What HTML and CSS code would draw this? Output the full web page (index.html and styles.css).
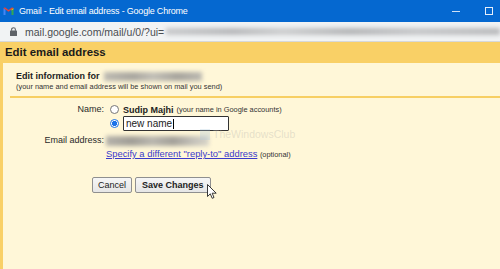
FILE: index.html
```html
<!DOCTYPE html>
<html lang="en">
<head>
    <meta charset="UTF-8">
    <title>Gmail - Edit email address - Google Chrome</title>
    <link rel="stylesheet" href="styles.css">
</head>
<body>
    <div class="titlebar">
        <svg class="gmail-logo" width="11" height="8" viewBox="0 0 11 8">
            <path d="M0.5 8V1.2L2.5 2.6V8Z" fill="#4285f4"/>
            <path d="M8.5 8V2.6L10.5 1.2V8Z" fill="#34a853"/>
            <path d="M0.5 1.2Q1 0 2.2 0.6L5.5 3L8.8 0.6Q10 0 10.5 1.2L8.5 2.6L5.5 4.8L2.5 2.6Z" fill="#ea4335"/>
            <path d="M8.5 2.6L10.5 1.2V2.2L8.5 3.6Z" fill="#fbbc04"/>
        </svg>
        <span class="title-text">Gmail - Edit email address - Google Chrome</span>
        <span class="win-btn minimize"></span>
        <span class="win-btn maximize"></span>
    </div>

    <div class="addressbar">
        <svg class="lock" width="7" height="9" viewBox="0 0 7 9">
            <rect x="0" y="3.6" width="7" height="5.4" rx="0.6" fill="#5f6368"/>
            <path d="M1.6 3.8V2.6A1.9 1.9 0 0 1 5.4 2.6V3.8" fill="none" stroke="#5f6368" stroke-width="1.1"/>
        </svg>
        <span class="url">mail.google.com/mail/u/0/?ui=</span>
        <span class="blur url-rest"></span>
    </div>

    <div class="header">Edit email address</div>

    <div class="content">
        <div class="info">
            <div class="info-title">Edit information for <span class="blur info-email"></span></div>
            <div class="info-note">(your name and email address will be shown on mail you send)</div>
        </div>

        <div class="form">
            <div class="label">Name:</div>
            <div class="value">
                <div class="radio-row">
                    <span class="radio"></span>
                    <b>Sudip Majhi</b> <span class="hint">(your name in Google accounts)</span>
                </div>
                <div class="radio-row">
                    <span class="radio checked"></span>
                    <span class="text-input">new name<span class="caret"></span></span>
                </div>
            </div>

            <div class="label email-label">Email address:</div>
            <div class="value">
                <div class="blur email-value"></div>
                <div class="link-row">
                    <a href="#" class="link">Specify a different "reply-to" address</a> <span class="hint">(optional)</span>
                </div>
            </div>
        </div>

        <div class="buttons">
            <button class="btn">Cancel</button>
            <button class="btn btn-save">Save Changes</button>
        </div>
    </div>

    <div class="watermark">
        <span class="wm-logo"></span>TheWindowsClub
    </div>

    <svg class="pointer" width="11" height="16" viewBox="0 0 11 16">
        <path d="M0.5 0.5V12.5L3.3 9.8L5.2 14.3L7 13.5L5.2 9.2H9.2Z" fill="#fff" stroke="#222" stroke-width="0.9" stroke-linejoin="round"/>
    </svg>
</body>
</html>
```

FILE: styles.css
```css
body {
    margin: 0;
    width: 500px;
    height: 269px;
    overflow: hidden;
    position: relative;
    background-color: #fff7d8;
    font-family: 'Liberation Sans', Arial, sans-serif;
    color: #222;
}

.titlebar {
    height: 22px;
    background-color: #0568d0;
    display: flex;
    align-items: center;
    color: #fff;
}
.gmail-logo {
    margin-left: 3px;
    margin-right: 5px;
}
.title-text {
    font-size: 9px;
    letter-spacing: -0.2px;
    flex: 1;
}
.win-btn {
    display: block;
    box-sizing: border-box;
}
.minimize {
    width: 8px;
    height: 1px;
    background-color: #cfe0f5;
    margin-right: 25px;
}
.maximize {
    width: 8px;
    height: 8px;
    border: 1px solid #e6eefa;
    margin-right: 7px;
}

.addressbar {
    height: 19px;
    background-color: #f1f3f4;
    border-bottom: 1px solid #d6d8da;
    display: flex;
    align-items: center;
}
.lock {
    margin-left: 10px;
    margin-right: 8px;
}
.url {
    font-size: 10.5px;
    color: #4a4d51;
}
.blur {
    display: inline-block;
    filter: blur(2px);
}
.url-rest {
    flex: 1;
    height: 7px;
    margin-left: 2px;
    background: linear-gradient(90deg, #c9cacc, #b8b9bb 20%, #cdcecf 35%, #b5b6b8 55%, #c6c7c9 75%, #babbbd);
}

.header {
    height: 21px;
    box-sizing: border-box;
    padding: 4px 0 0 5px;
    background-color: #f9d066;
    font-size: 11.4px;
    font-weight: bold;
    color: #1a1a1a;
}

.content {
    border-left: 3px solid #f9d066;
    padding: 7px 0 0 7px;
    height: 206px;
    box-sizing: border-box;
}
.info {
    padding: 0 0 4px 6px;
    border-bottom: 2px solid #f7cf63;
}
.info-title {
    font-size: 9px;
    font-weight: bold;
    line-height: 12px;
    display: flex;
    align-items: center;
}
.info-email {
    width: 98px;
    height: 9px;
    margin-left: 4px;
    background: linear-gradient(90deg, #bdbab2, #a9a69f 30%, #c2bfb7 50%, #a7a49d 75%, #bcb9b1);
}
.info-note {
    font-size: 7.4px;
    line-height: 10px;
    color: #333;
}

.form {
    display: grid;
    grid-template-columns: 94px 1fr;
    column-gap: 2px;
    margin-top: 5px;
    font-size: 9px;
}
.label {
    text-align: right;
    line-height: 13px;
    color: #2a2a2a;
}
.email-label {
    margin-top: 3px;
}
.radio-row {
    display: flex;
    align-items: center;
    height: 13px;
    margin-left: 4px;
}
.radio-row + .radio-row {
    height: 15px;
}
.radio-row b {
    margin-right: 3px;
}
.radio {
    width: 9px;
    height: 9px;
    box-sizing: border-box;
    border: 1px solid #767676;
    border-radius: 50%;
    background-color: #fff;
    margin-right: 4px;
    flex: none;
}
.radio.checked {
    border: 1px solid #1a73e8;
    background: radial-gradient(circle, #1a73e8 0, #1a73e8 2.4px, #fff 2.9px);
}
.hint {
    font-size: 7.4px;
    color: #333;
}
.text-input {
    width: 106px;
    height: 15px;
    box-sizing: border-box;
    border: 1.5px solid #333;
    border-radius: 1px;
    background-color: #fff;
    padding-left: 2px;
    font-size: 10px;
    line-height: 12px;
    display: flex;
    align-items: center;
}
.caret {
    width: 1px;
    height: 10px;
    background-color: #000;
    margin-left: 1px;
}
.email-value {
    display: block;
    width: 103px;
    height: 10px;
    margin-top: 5px;
    background: linear-gradient(90deg, #b5b2aa, #a19e97 25%, #bab7af 45%, #a4a19a 65%, #c4c1b9 85%, #d9d5c9);
}
.link-row {
    margin-top: 2px;
    line-height: 12px;
}
.link {
    color: #3a3acb;
    font-size: 9.4px;
}

.buttons {
    display: flex;
    gap: 3px;
    margin: 16px 0 0 82px;
}
.btn {
    height: 16px;
    padding: 0 5px;
    font-family: 'Liberation Sans', Arial, sans-serif;
    font-size: 9px;
    color: #222;
    background: linear-gradient(#f6f6f6, #e6e6e6);
    border: 1px solid #8f8f8f;
    border-radius: 2px;
}
.btn-save {
    font-weight: bold;
    padding: 0 6px;
}

.watermark {
    position: absolute;
    left: 200px;
    top: 128px;
    display: flex;
    align-items: center;
    font-size: 10.5px;
    color: rgba(180, 178, 170, 0.35);
}
.wm-logo {
    width: 10px;
    height: 11px;
    margin-right: 3px;
    background-color: rgba(170, 200, 220, 0.3);
}

.pointer {
    position: absolute;
    left: 207px;
    top: 184px;
}
```
